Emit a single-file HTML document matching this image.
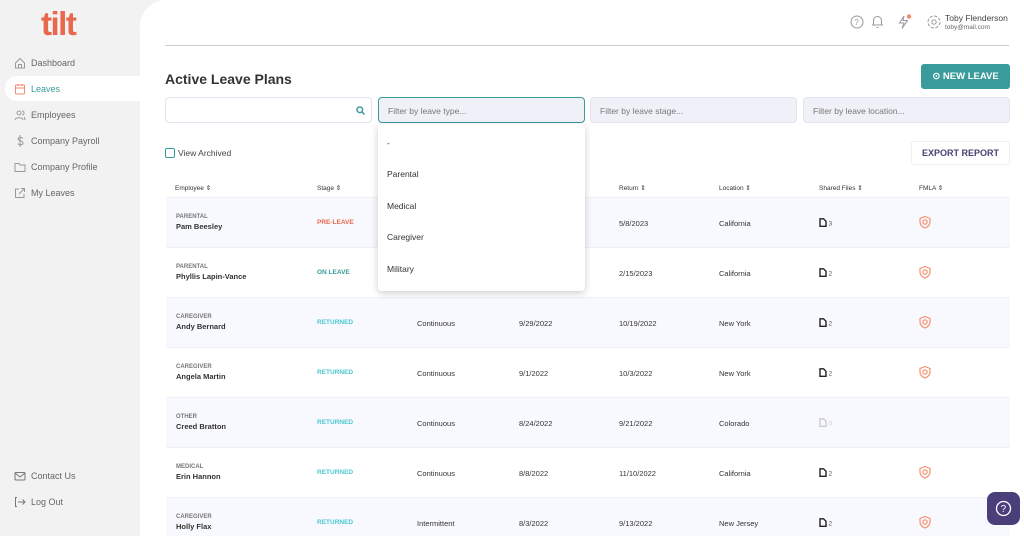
<!DOCTYPE html>
<html><head><style>
*{margin:0;padding:0;box-sizing:border-box}
body{width:1024px;height:536px;overflow:hidden;background:#f2f2f2;font-family:"Liberation Sans",sans-serif;position:relative;color:#333}
.side{position:absolute;left:0;top:0;width:140px;height:536px;background:#f2f2f2}
.logo{position:absolute;left:41px;top:5px;font-size:33px;font-weight:bold;color:#e8674d;letter-spacing:-1.5px}
.nav{position:absolute;left:14px;font-size:9px;color:#666;display:flex;align-items:center;gap:5px}
.nav svg{width:12px;height:12px}
.act{position:absolute;left:5px;top:76px;width:140px;height:25px;background:#fff;border-radius:12px 0 0 12px}
.main{position:absolute;left:140px;top:0;width:884px;height:536px;background:#fff;border-top-left-radius:26px;overflow:hidden}
.abs{position:absolute}
.hr{left:25px;top:45px;width:844px;height:1px;background:#ccc}
h1{position:absolute;left:25px;top:71px;font-size:14px;font-weight:bold;color:#333}
.btn{left:781px;top:64px;width:89px;height:25px;background:#3a9b9b;border-radius:3px;color:#fff;font-size:9.5px;font-weight:bold;display:flex;align-items:center;justify-content:center}
.inp{top:97px;height:26px;border:1px solid #e2e4ef;background:#f0f1f8;border-radius:4px;font-size:8.5px;color:#777;padding:8px 9px}
.exp{left:771px;top:141px;width:99px;height:24px;border:1px solid #eee;border-radius:3px;font-size:9px;font-weight:bold;color:#4a4070;display:flex;align-items:center;justify-content:center}
.th{top:184px;font-size:6.5px;color:#333}
.row{left:26px;width:844px;height:50px;border-top:1px solid #eef0f6}
.sh{background:#f8f9fe}
.c{position:absolute;font-size:7.5px;color:#333}
.tp{font-size:6px;color:#777;font-weight:bold}
.nm{font-size:7.5px;font-weight:bold;color:#333}
.st{font-size:6.5px;font-weight:bold}
.dd{left:238px;top:124px;width:207px;height:167px;background:#fff;border-radius:4px;box-shadow:0 2px 8px rgba(0,0,0,.2)}
.dd div{position:absolute;left:9px;font-size:8.5px;color:#333}
</style></head><body>
<div class="side">
<div class="logo">tilt</div>
<div class="act"></div>
<div class="nav" style="top:57px"><svg viewBox="0 0 12 12" fill="none" stroke="#999"><path d="M1.5 6L6 1.5 10.5 6V11h-9z M4.5 11V7.5h3V11"/></svg>Dashboard</div>
<div class="nav" style="top:83px;color:#3a9b9b"><svg viewBox="0 0 12 12" fill="none" stroke="#f08a70"><rect x="1.5" y="2" width="9" height="9" rx="1"/><path d="M1.5 5h9M4 1v2M8 1v2"/></svg>Leaves</div>
<div class="nav" style="top:109px"><svg viewBox="0 0 12 12" fill="none" stroke="#999"><circle cx="5" cy="4" r="2"/><path d="M1 11c0-3 8-3 8 0M8 2a2 2 0 010 4M10 8c1 1 1 2 1 3"/></svg>Employees</div>
<div class="nav" style="top:135px"><svg viewBox="0 0 12 12" fill="none" stroke="#999"><path d="M6 0v12M8.5 3.5C8 2 4 2 4 4s5 1.5 5 4-4.5 2-5 .5"/></svg>Company Payroll</div>
<div class="nav" style="top:161px"><svg viewBox="0 0 12 12" fill="none" stroke="#999"><path d="M1 2.5h4l1 1.5h5v6.5H1z"/></svg>Company Profile</div>
<div class="nav" style="top:187px"><svg viewBox="0 0 12 12" fill="none" stroke="#999"><path d="M5 2H1.5v8.5H10V7M7 1.5h3.5V5M10.5 1.5L5 7"/></svg>My Leaves</div>
<div class="nav" style="top:470px"><svg viewBox="0 0 12 12" fill="none" stroke="#777"><rect x="1" y="2.5" width="10" height="7.5" rx="1"/><path d="M1 3l5 4 5-4"/></svg>Contact Us</div>
<div class="nav" style="top:496px"><svg viewBox="0 0 12 12" fill="none" stroke="#777"><path d="M3 1.5H1.5v9H3M4 6h7M8.5 3.5L11 6 8.5 8.5"/></svg>Log Out</div>
</div>
<div class="main">
<svg class="abs" style="left:709px;top:14px" width="72" height="16" fill="none" stroke="#999"><circle cx="8" cy="8" r="6"/><text x="5.3" y="11" font-size="8" fill="#999" stroke="none" font-family="Liberation Sans">?</text><path d="M23 11h11M24.5 11V6.5a4 4 0 018 0V11M27.5 13.5h2"/><path d="M55 2l-4.5 7h4.5l-2 5.5 5.5-8h-4.5z"/><circle cx="60" cy="2.5" r="2.2" fill="#f08a70" stroke="none"/></svg>
<svg class="abs" style="left:786px;top:14px" width="16" height="16" fill="none" stroke="#999"><circle cx="8" cy="8" r="2.2"/><circle cx="8" cy="8" r="6" stroke-dasharray="3.2 1.5"/></svg>
<div class="abs" style="left:805px;top:13px;font-size:8.5px;color:#444">Toby Flenderson</div>
<div class="abs" style="left:805px;top:24px;font-size:6.5px;color:#666">toby@mail.com</div>
<div class="abs hr"></div>
<h1>Active Leave Plans</h1>
<div class="abs btn">⊙&nbsp;NEW LEAVE</div>
<div class="abs inp" style="left:25px;width:207px;background:#fff"><svg style="position:absolute;right:6px;top:8px" width="9" height="9" fill="none" stroke="#3a9b9b" stroke-width="1.5"><circle cx="3.8" cy="3.8" r="2.8"/><path d="M6 6l2.5 2.5"/></svg></div>
<div class="abs inp" style="left:238px;width:207px;border-color:#3a9b9b">Filter by leave type...</div>
<div class="abs inp" style="left:450px;width:207px">Filter by leave stage...</div>
<div class="abs inp" style="left:663px;width:207px">Filter by leave location...</div>
<div class="abs" style="left:25px;top:148px;width:10px;height:10px;border:1.5px solid #3a9b9b;border-radius:2px"></div>
<div class="abs" style="left:38px;top:148px;font-size:8.5px;color:#444">View Archived</div>
<div class="abs exp">EXPORT REPORT</div>
<div class="abs th" style="left:35px">Employee ⇕</div>
<div class="abs th" style="left:177px">Stage ⇕</div>
<div class="abs th" style="left:479px">Return ⇕</div>
<div class="abs th" style="left:579px">Location ⇕</div>
<div class="abs th" style="left:679px">Shared Files ⇕</div>
<div class="abs th" style="left:779px">FMLA ⇕</div>
<div id="rows"></div>
<div class="abs dd"><div style="top:14px">-</div><div style="top:45px">Parental</div><div style="top:77px">Medical</div><div style="top:108px">Caregiver</div><div style="top:140px">Military</div></div>
<div class="abs" style="left:847px;top:492px;width:33px;height:33px;background:#4a3f7a;border-radius:8px"><svg width="33" height="33" fill="none" stroke="#fff" stroke-width="1.3"><circle cx="16.5" cy="16.5" r="7"/><text x="13.6" y="20" font-size="10" fill="#fff" stroke="none" font-family="Liberation Sans">?</text></svg></div>
</div>
<script>
var d=[["PARENTAL","Pam Beesley","PRE-LEAVE","#e8674d","","","5/8/2023","California","3"],
["PARENTAL","Phyllis Lapin-Vance","ON LEAVE","#3a9b9b","","","2/15/2023","California","2"],
["CAREGIVER","Andy Bernard","RETURNED","#4cc7d0","Continuous","9/29/2022","10/19/2022","New York","2"],
["CAREGIVER","Angela Martin","RETURNED","#4cc7d0","Continuous","9/1/2022","10/3/2022","New York","2"],
["OTHER","Creed Bratton","RETURNED","#4cc7d0","Continuous","8/24/2022","9/21/2022","Colorado","0"],
["MEDICAL","Erin Hannon","RETURNED","#4cc7d0","Continuous","8/8/2022","11/10/2022","California","2"],
["CAREGIVER","Holly Flax","RETURNED","#4cc7d0","Intermittent","8/3/2022","9/13/2022","New Jersey","2"]];
var h="";d.forEach(function(r,i){var y=197+i*50;var z=r[8]=="0";var fc=z?"#ccc":"#222";
h+='<div class="abs row'+(i%2==0?' sh':'')+'" style="top:'+y+'px">'+
'<div class="c tp" style="left:10px;top:16px">'+r[0]+'</div><div class="c nm" style="left:10px;top:24px">'+r[1]+'</div>'+
'<div class="c st" style="left:151px;top:21px;color:'+r[3]+'">'+r[2]+'</div>'+
'<div class="c" style="left:251px;top:21px">'+r[4]+'</div><div class="c" style="left:353px;top:21px">'+r[5]+'</div>'+
'<div class="c" style="left:453px;top:21px">'+r[6]+'</div><div class="c" style="left:553px;top:21px">'+r[7]+'</div>'+
'<svg class="c" style="left:653px;top:20px" width="16" height="9"><path d="M1 .8h3.5L7 3.3v5H1z" fill="none" stroke="'+fc+'" stroke-width="1.4"/><text x="9.5" y="7.5" font-size="6.5" fill="'+(z?"#ccc":"#555")+'" font-family="Liberation Sans">'+r[8]+'</text></svg>'+
(z?'':'<svg class="c" style="left:752px;top:17px" width="14" height="14" fill="none" stroke="#f5906f" stroke-width="1.2"><path d="M7 1.5l5 2v3.5c0 3-2.5 5-5 6-2.5-1-5-3-5-6V3.5z"/><circle cx="7" cy="7" r="2.2"/></svg>')+'</div>';});
document.getElementById("rows").innerHTML=h;
</script>
</body></html>
